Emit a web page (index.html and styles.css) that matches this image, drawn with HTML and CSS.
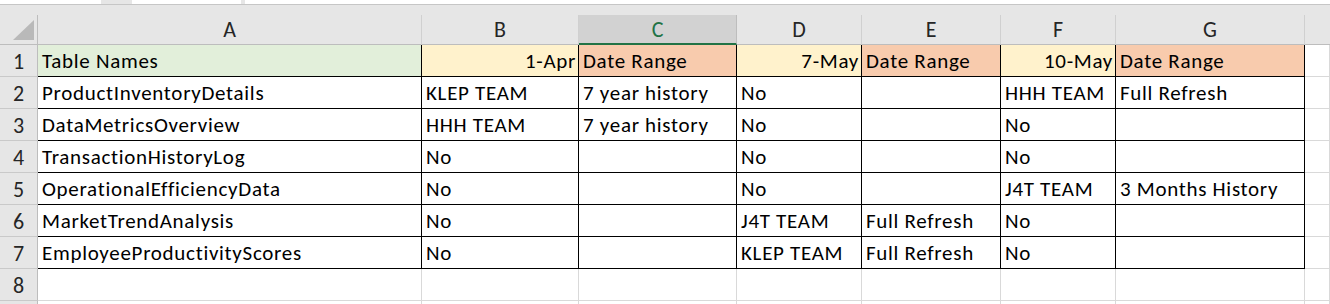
FILE: index.html
```html
<!DOCTYPE html>
<html>
<head>
<meta charset="utf-8">
<link rel="stylesheet" href="styles.css">
</head>
<body>
<div class="strip">
  <div class="box box-name"></div>
  <div class="box box-btn"></div>
  <div class="box box-formula"></div>
</div>
<div class="sheet">
  <div class="corner"><svg width="38" height="29" viewBox="0 0 38 29"><polygon points="34,5 34,25 13,25" fill="#b9b9b9"/></svg></div>
  <div class="ch">A</div>
  <div class="ch">B</div>
  <div class="ch sel">C</div>
  <div class="ch">D</div>
  <div class="ch">E</div>
  <div class="ch">F</div>
  <div class="ch">G</div>
  <div class="ch last"></div>

  <div class="rh">1</div>
  <div class="c t green">Table Names</div>
  <div class="c t yellow r">1-Apr</div>
  <div class="c t orange">Date Range</div>
  <div class="c t yellow r">7-May</div>
  <div class="c t orange">Date Range</div>
  <div class="c t yellow r">10-May</div>
  <div class="c t orange">Date Range</div>
  <div class="c g"></div>

  <div class="rh">2</div>
  <div class="c t">ProductInventoryDetails</div>
  <div class="c t">KLEP TEAM</div>
  <div class="c t">7 year history</div>
  <div class="c t">No</div>
  <div class="c t"></div>
  <div class="c t">HHH TEAM</div>
  <div class="c t">Full Refresh</div>
  <div class="c g"></div>

  <div class="rh">3</div>
  <div class="c t">DataMetricsOverview</div>
  <div class="c t">HHH TEAM</div>
  <div class="c t">7 year history</div>
  <div class="c t">No</div>
  <div class="c t"></div>
  <div class="c t">No</div>
  <div class="c t"></div>
  <div class="c g"></div>

  <div class="rh">4</div>
  <div class="c t">TransactionHistoryLog</div>
  <div class="c t">No</div>
  <div class="c t"></div>
  <div class="c t">No</div>
  <div class="c t"></div>
  <div class="c t">No</div>
  <div class="c t"></div>
  <div class="c g"></div>

  <div class="rh">5</div>
  <div class="c t">OperationalEfficiencyData</div>
  <div class="c t">No</div>
  <div class="c t"></div>
  <div class="c t">No</div>
  <div class="c t"></div>
  <div class="c t">J4T TEAM</div>
  <div class="c t">3 Months History</div>
  <div class="c g"></div>

  <div class="rh">6</div>
  <div class="c t">MarketTrendAnalysis</div>
  <div class="c t">No</div>
  <div class="c t"></div>
  <div class="c t">J4T TEAM</div>
  <div class="c t">Full Refresh</div>
  <div class="c t">No</div>
  <div class="c t"></div>
  <div class="c g"></div>

  <div class="rh">7</div>
  <div class="c t">EmployeeProductivityScores</div>
  <div class="c t">No</div>
  <div class="c t"></div>
  <div class="c t">KLEP TEAM</div>
  <div class="c t">Full Refresh</div>
  <div class="c t">No</div>
  <div class="c t"></div>
  <div class="c g"></div>

  <div class="rh">8</div>
  <div class="c g"></div>
  <div class="c g"></div>
  <div class="c g"></div>
  <div class="c g"></div>
  <div class="c g"></div>
  <div class="c g"></div>
  <div class="c g"></div>
  <div class="c g"></div>

  <div class="rh"></div>
  <div class="c g"></div>
  <div class="c g"></div>
  <div class="c g"></div>
  <div class="c g"></div>
  <div class="c g"></div>
  <div class="c g"></div>
  <div class="c g"></div>
  <div class="c g"></div>
</div>
</body>
</html>
```
FILE: styles.css
```css
html, body {
  margin: 0;
  padding: 0;
  background: #e6e6e6;
  overflow: hidden;
}
body {
  width: 1330px;
  height: 304px;
  font-family: Carlito, Calibri, Lato, "Liberation Sans", sans-serif;
  font-size: 21px;
  letter-spacing: 0.7px;
  color: #000;
}
.strip {
  display: flex;
  height: 4px;
  border-bottom: 1px solid #c6c6c6;
  background: #e6e6e6;
}
.box {
  background: #fff;
  height: 4px;
}
.box-name { width: 101px; }
.box-btn { width: 109px; margin-left: 31px; }
.box-formula { flex: 1; margin-left: 4px; }
.sheet {
  margin-top: 10px;
  height: 289px;
  overflow: hidden;
  display: grid;
  grid-template-columns: 38px 384px 157px 158px 125px 139px 115px 189px 1fr;
  grid-template-rows: 30px repeat(9, 32px);
}
.corner {
  border-right: 1px solid #bdbdbd;
  border-bottom: 1px solid #bdbdbd;
  height: 29px;
}
.corner svg { display: block; }
.ch {
  border-right: 1px solid #d0d0d0;
  border-bottom: 1px solid #bdbdbd;
  display: flex;
  align-items: center;
  justify-content: center;
  color: #262626;
  font-size: 22px;
  letter-spacing: 0;
  line-height: 1;
  padding-top: 1px;
}
.ch.sel {
  background: #d2d2d2;
  color: #217346;
  border-bottom: 2px solid #217346;
  border-right-color: #bdbdbd;
}
.ch.last { border-right: none; }
.rh {
  border-right: 1px solid #bdbdbd;
  border-bottom: 1px solid #c9c9c9;
  display: flex;
  align-items: center;
  justify-content: center;
  color: #262626;
  font-size: 22px;
  letter-spacing: 0;
  padding-top: 2px;
}
.c {
  background: #fff;
  white-space: nowrap;
  overflow: hidden;
}
.t {
  border-right: 1px solid #000;
  border-bottom: 1px solid #000;
  display: flex;
  align-items: flex-end;
  padding: 0 3px 3px 4px;
  line-height: 24px;
}
.t.r { justify-content: flex-end; padding-right: 2px; }
.g {
  border-right: 1px solid #d9d9d9;
  border-bottom: 1px solid #d9d9d9;
}
.green { background: #e2efda; }
.yellow { background: #fff2cc; }
.orange { background: #f8cbad; }
```
